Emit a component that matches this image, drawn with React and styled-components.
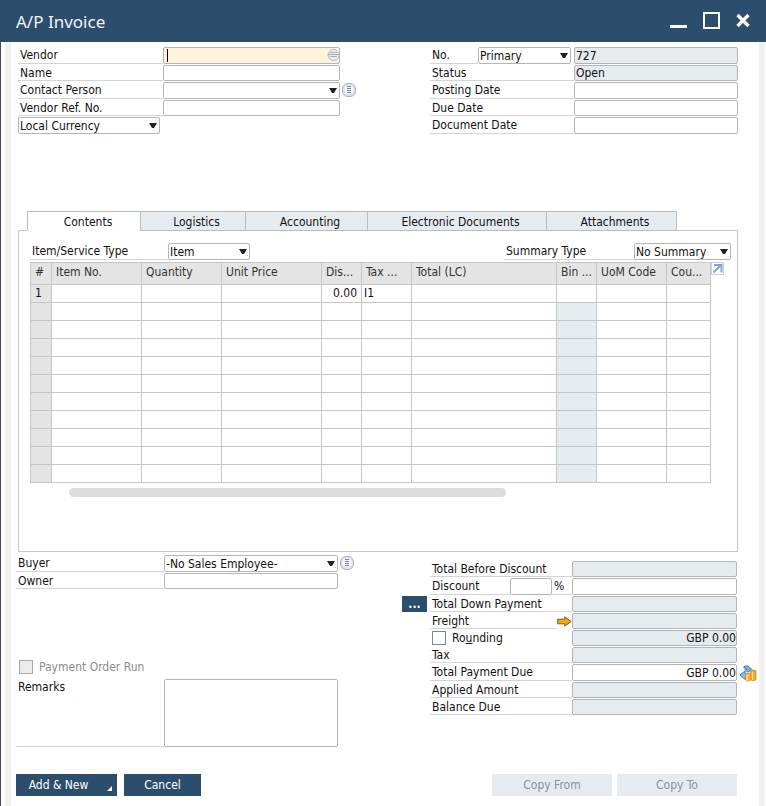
import React from "react";
import styled, { createGlobalStyle } from "styled-components";

const tabs = [
  { name: "Contents", width: 114, active: true },
  { name: "Logistics", width: 105 },
  { name: "Accounting", width: 122 },
  { name: "Electronic Documents", width: 179 },
  { name: "Attachments", width: 130 },
];

const columns = [
  { title: "#", width: 21 },
  { title: "Item No.", width: 90 },
  { title: "Quantity", width: 80 },
  { title: "Unit Price", width: 100 },
  { title: "Dis...", width: 40 },
  { title: "Tax ...", width: 50 },
  { title: "Total (LC)", width: 145 },
  { title: "Bin ...", width: 40 },
  { title: "UoM Code", width: 70 },
  { title: "Cou...", width: 44 },
];

const rows = [
  ["1", "", "", "", "0.00", "I1", "", "", "", ""],
  ...Array.from({ length: 10 }, () => Array(10).fill("")),
];

const ListIcon = () => (
  <svg width="14" height="14" viewBox="0 0 14 14" aria-hidden="true">
    <rect x="0.5" y="0.5" width="13" height="13" rx="5.5" fill="#dfe3f1" stroke="#a9b0c4" />
    <circle cx="7" cy="6.5" r="4.5" fill="#f3f4fa" />
    <path d="M5 3.5h4M5 5.5h4M5 7.5h4M5 9.5h4" stroke="#7b8190" />
  </svg>
);

const LookupIcon = () => (
  <svg width="13" height="14" viewBox="0 0 13 14" aria-hidden="true">
    <circle cx="6.5" cy="7" r="5.5" fill="#e9ecec" stroke="#b3bac2" />
    <path d="M3 4.5h7M1 6.5h10M3 8.5h7" stroke="#9db1c9" />
  </svg>
);

const ExpandIcon = () => (
  <svg width="14" height="14" viewBox="0 0 14 14" aria-hidden="true">
    <rect x="0.5" y="0.5" width="12" height="12" fill="#fff" stroke="#c3d0e3" />
    <path d="M2.5 10.500l7-7M3 3h7.500v7.500" fill="none" stroke="#8ba3c7" strokeWidth="2" />
  </svg>
);

const ArrowIcon = () => (
  <svg width="15" height="11" viewBox="0 0 15 11" aria-hidden="true">
    <path
      d="M.7 3.2h7.1V.8l6.2 4.7-6.2 4.7V7.8H.7z"
      fill="#f2a90c"
      stroke="#7a5c1c"
      strokeWidth="1"
    />
  </svg>
);

const CoinsIcon = () => (
  <svg width="18" height="17" viewBox="0 0 18 17" aria-hidden="true">
    <path
      d="M5 1.500c3-1.500 6 0 6 2.500h1.500L9 7.500 6 4.500h1.500C7.500 3.500 6.500 2.500 5 3z"
      fill="#7cb5e2"
      stroke="#2f6fa8"
    />
    <path
      d="M1 10l5-4v2c1 2 1 4 0 6.500l-2-2z"
      fill="#8cc0e8"
      stroke="#2f6fa8"
    />
    <path
      d="M6.500 9.500c0-1.500 5-1.500 5 0v5.500c0 1.500-5 1.500-5 0z"
      fill="#f6b73c"
      stroke="#d98a16"
      strokeWidth="0.8"
    />
    <path
      d="M11.500 6c0-1.300 5.500-1.300 5.500 0v8.500c0 1.300-5.500 1.300-5.500 0z"
      fill="#f3a622"
      stroke="#d98a16"
      strokeWidth="0.8"
    />
    <path d="M8 10v6M13.500 7v8" stroke="#fde3a0" strokeWidth="1.300" />
  </svg>
);

const Select = ({ id, label, value }) => (
  <SelectBox>
    <select id={id} aria-label={label} defaultValue={value}>
      <option>{value}</option>
    </select>
    <svg width="8" height="5" viewBox="0 0 8 5" aria-hidden="true">
      <path d="M0 0h8L5 5H3z" fill="#222" />
    </svg>
  </SelectBox>
);

const Field = ({ id, label, value, readOnly, right }) => (
  <Row>
    <Label htmlFor={id}>{label}</Label>
    <Input id={id} defaultValue={value} readOnly={readOnly} $muted={readOnly} $right={right} />
  </Row>
);

const App = () => {
  return (
    <>
      <GlobalStyle />
      <Window>
        <TitleBar>
          <h1>A/P Invoice</h1>
          <WindowButtons>
            <button aria-label="Minimize">
              <svg width="17" height="17" viewBox="0 0 17 17">
                <path d="M0 14.500h17" stroke="#fff" strokeWidth="3" />
              </svg>
            </button>
            <button aria-label="Maximize">
              <svg width="17" height="17" viewBox="0 0 17 17">
                <path d="M1 1h15v15H1z" fill="none" stroke="#fff" strokeWidth="2" />
              </svg>
            </button>
            <button aria-label="Close">
              <svg width="14" height="17" viewBox="0 0 14 17">
                <path d="M1.500 3l11 11M12.500 3l-11 11" stroke="#fff" strokeWidth="3.400" />
              </svg>
            </button>
          </WindowButtons>
        </TitleBar>

        <Frame>
          <Content>
            <Header>
              <Fields>
                <Row>
                  <Label htmlFor="vendor">Vendor</Label>
                  <Lookup>
                    <Input id="vendor" $active />
                    <Caret />
                    <LookupIcon />
                  </Lookup>
                </Row>
                <Field id="name" label="Name" />
                <Row>
                  <Label htmlFor="contact">Contact Person</Label>
                  <Select id="contact" value="" />
                  <SideButton aria-label="Contact details">
                    <ListIcon />
                  </SideButton>
                </Row>
                <Field id="ref" label="Vendor Ref. No." />
                <Row $columns="142px">
                  <Select label="Currency" value="Local Currency" />
                </Row>
              </Fields>

              <Fields $columns="144px 1fr">
                <Row $columns="48px 93px 3px 1fr">
                  <Label htmlFor="docNo">No.</Label>
                  <Select label="Series" value="Primary" />
                  <span />
                  <Input id="docNo" defaultValue="727" readOnly $muted />
                </Row>
                <Field id="status" label="Status" value="Open" readOnly />
                <Field id="posting" label="Posting Date" />
                <Field id="due" label="Due Date" />
                <Field id="document" label="Document Date" />
              </Fields>
            </Header>

            <Tabs role="tablist">
              {tabs.map((tab) => (
                <Tab
                  key={tab.name}
                  role="tab"
                  aria-selected={!!tab.active}
                  $active={tab.active}
                  $width={tab.width}
                >
                  {tab.name}
                </Tab>
              ))}
            </Tabs>

            <Panel>
              <PanelTop>
                <Row $columns="138px 82px">
                  <Label htmlFor="itemType">Item/Service Type</Label>
                  <Select id="itemType" value="Item" />
                </Row>
                <Row $columns="130px 97px">
                  <Label htmlFor="summary">Summary Type</Label>
                  <Select id="summary" value="No Summary" />
                </Row>
              </PanelTop>
              <TableArea>
                <Table>
                  <colgroup>
                    {columns.map((col) => (
                      <Col key={col.title} $width={col.width} />
                    ))}
                  </colgroup>
                  <thead>
                    <tr>
                      {columns.map((col) => (
                        <th key={col.title}>{col.title}</th>
                      ))}
                    </tr>
                  </thead>
                  <tbody>
                    {rows.map((row, i) => (
                      <tr key={i}>
                        {row.map((cell, j) => (
                          <Cell
                            key={j}
                            $head={j === 0}
                            $right={j === 4}
                            $muted={j === 7 && i > 0}
                          >
                            {cell}
                          </Cell>
                        ))}
                      </tr>
                    ))}
                  </tbody>
                </Table>
                <IconButton aria-label="Expand table">
                  <ExpandIcon />
                </IconButton>
              </TableArea>
              <ScrollTrack>
                <ScrollThumb />
              </ScrollTrack>
            </Panel>

            <Bottom>
              <BottomLeft>
                <Fields $columns="148px 1fr">
                  <Row>
                    <Label htmlFor="buyer">Buyer</Label>
                    <Select id="buyer" value="-No Sales Employee-" />
                    <SideButton aria-label="Buyer details">
                      <ListIcon />
                    </SideButton>
                  </Row>
                  <Field id="owner" label="Owner" />
                </Fields>
                <div>
                  <CheckLabel $disabled>
                    <input type="checkbox" disabled />
                    <span>Payment Order Run</span>
                  </CheckLabel>
                  <Remarks>
                    <Label htmlFor="remarks">Remarks</Label>
                    <textarea id="remarks" />
                  </Remarks>
                </div>
              </BottomLeft>

              <Fields $columns="142px 1fr" $rows="17px 18px 17px 17px 17px">
                <Field id="before" label="Total Before Discount" readOnly />
                <Row $columns="80px 42px 20px 1fr">
                  <Label htmlFor="discount">Discount</Label>
                  <Input id="discount" aria-label="Discount percent" />
                  <Label htmlFor="discountTotal">%</Label>
                  <Input id="discountTotal" />
                </Row>
                <Row>
                  <MoreButton aria-label="Down payments">...</MoreButton>
                  <Label htmlFor="down">Total Down Payment</Label>
                  <Input id="down" readOnly $muted />
                </Row>
                <Row $columns="127px 15px 1fr">
                  <Label htmlFor="freight">Freight</Label>
                  <IconButton aria-label="Open freight">
                    <ArrowIcon />
                  </IconButton>
                  <Input id="freight" readOnly $muted />
                </Row>
                <Row>
                  <CheckLabel>
                    <input type="checkbox" />
                    <span>
                      Ro<u>u</u>nding
                    </span>
                  </CheckLabel>
                  <Input aria-label="Rounding" defaultValue="GBP 0.00" readOnly $muted $right />
                </Row>
                <Field id="tax" label="Tax" readOnly />
                <Row>
                  <Label htmlFor="payment">Total Payment Due</Label>
                  <Input id="payment" defaultValue="GBP 0.00" $right />
                  <SideButton aria-label="Payment means">
                    <CoinsIcon />
                  </SideButton>
                </Row>
                <Field id="applied" label="Applied Amount" readOnly />
                <Field id="balance" label="Balance Due" readOnly />
              </Fields>
            </Bottom>

            <Footer>
              <ButtonGroup>
                <Button $width={101} $menu>
                  Add &amp; New
                  <svg width="5" height="5" viewBox="0 0 5 5">
                    <path d="M5 0v5H0z" fill="#fff" />
                  </svg>
                </Button>
                <Button $width={77}>Cancel</Button>
              </ButtonGroup>
              <ButtonGroup $tight>
                <Button $width={120} disabled>
                  Copy From
                </Button>
                <Button $width={120} disabled>
                  Copy To
                </Button>
              </ButtonGroup>
            </Footer>
          </Content>
        </Frame>
      </Window>
    </>
  );
};

export default App;

const GlobalStyle = createGlobalStyle`
  * {
    box-sizing: border-box;
  }
  body {
    margin: 0;
    background-color: #fff;
  }
  body, button, input, select, textarea {
    font-family: "DejaVu Sans Condensed", Tahoma, "Noto Sans", sans-serif;
    font-size: 12px;
    color: #111;
  }
  button {
    border: none;
    padding: 0;
    background: none;
    cursor: pointer;
  }
  svg {
    display: block;
  }
`;

const Window = styled.div`
  min-height: 100vh;
  display: flex;
  flex-direction: column;
`;

const TitleBar = styled.header`
  height: 42px;
  display: flex;
  align-items: center;
  justify-content: space-between;
  padding: 0 16px 2px;
  background-color: #2c4d6b;
  h1 {
    margin: 0;
    padding-top: 2px;
    font-family: "Noto Sans", sans-serif;
    font-size: 17px;
    font-weight: 400;
    color: #f2f5f8;
  }
`;

const WindowButtons = styled.div`
  display: flex;
  align-items: center;
  gap: 16px;
`;

const Frame = styled.div`
  flex: 1;
  display: flex;
  border-left: 1px solid #3c4a60;
  padding: 0 1px 0 4px;
`;

const Content = styled.main`
  flex: 1;
  min-width: 0;
  border: solid #f1f1f1;
  border-width: 0 6px;
  padding: 5px 21px 10px 7px;
`;

const Header = styled.section`
  display: grid;
  grid-template-columns: 322fr 308fr;
  column-gap: 90px;
  min-height: 164px;
`;

const Fields = styled.div`
  --columns: ${({ $columns }) => $columns || "145px 1fr"};
  display: grid;
  grid-auto-rows: ${({ $rows }) => $rows || "18px 17px"};
  align-content: start;
`;

const Row = styled.div`
  position: relative;
  display: grid;
  grid-template-columns: ${({ $columns }) => $columns || "var(--columns)"};
  grid-template-rows: minmax(0, 1fr);
  padding-bottom: 1px;
`;

const Label = styled.label`
  padding-left: 2px;
  line-height: 17px;
  white-space: nowrap;
  border-bottom: 1px solid #d4d4d4;
`;

const Input = styled.input`
  width: 100%;
  min-width: 0;
  height: 100%;
  border: 1px solid #b4b4b4;
  border-radius: 2px;
  outline: none;
  padding: ${({ $right }) => ($right ? "0" : "0 1px")};
  text-align: ${({ $right }) => ($right ? "right" : "left")};
  background-color: ${({ $muted, $active }) =>
    $muted ? "#e6ebef" : $active ? "#fef4dd" : "#fff"};
`;

const Lookup = styled.div`
  position: relative;
  svg {
    position: absolute;
    top: 1px;
    right: 0;
  }
`;

const Caret = styled.span`
  position: absolute;
  left: 4px;
  top: 2px;
  bottom: 2px;
  width: 1px;
  background-color: #000;
`;

const SelectBox = styled.div`
  position: relative;
  select {
    display: block;
    width: 100%;
    height: 100%;
    appearance: none;
    border: 1px solid #b4b4b4;
    border-radius: 2px;
    outline: none;
    padding: 0 14px 0 1px;
    background-color: #fff;
  }
  svg {
    position: absolute;
    right: 3px;
    top: 6px;
    pointer-events: none;
  }
`;

const SideButton = styled.button`
  position: absolute;
  left: 100%;
  top: 1px;
  margin-left: 2px;
`;

const MoreButton = styled.button`
  position: absolute;
  right: 100%;
  top: 0;
  width: 25px;
  height: 16px;
  margin-right: 3px;
  line-height: 12px;
  font-weight: 700;
  color: #fff;
  background-color: #2c4d6b;
`;

const IconButton = styled.button`
  display: flex;
  align-items: center;
`;

const Tabs = styled.div`
  position: relative;
  display: flex;
  padding-left: 9px;
  margin-bottom: -1px;
`;

const Tab = styled.button`
  flex: 0 1 ${({ $width }) => $width}px;
  height: 20px;
  padding: 1px 0 0 7px;
  border: 1px solid #b9bdc0;
  border-left-width: ${({ $active }) => ($active ? "1px" : "0")};
  border-right-width: ${({ $active }) => ($active ? "0" : "1px")};
  border-bottom-color: ${({ $active }) => ($active ? "#fff" : "#b9bdc0")};
  background-color: ${({ $active }) => ($active ? "#fff" : "#e6ebef")};
  & + & {
    box-shadow: -1px 0 0 #b9bdc0;
  }
`;

const Panel = styled.section`
  min-height: 322px;
  border: 1px solid #c6c6c6;
  padding: 12px 6px 0 11px;
`;

const PanelTop = styled.div`
  height: 19px;
  display: flex;
  align-items: flex-start;
  justify-content: space-between;
  > div {
    height: 18px;
  }
`;

const TableArea = styled.div`
  display: flex;
  align-items: flex-start;
  padding-right: 7px;
`;

const Table = styled.table`
  flex: 1;
  width: 100%;
  table-layout: fixed;
  border-collapse: separate;
  border-spacing: 0;
  border: solid #c6c6c6;
  border-width: 1px 0 0 1px;
  th {
    height: 22px;
    padding: 0 0 3px 4px;
    font-weight: 400;
    text-align: left;
    color: #333;
    white-space: nowrap;
    background-color: #e4e4e4;
    border: solid #c6c6c6;
    border-width: 0 1px 1px 0;
  }
`;

const Col = styled.col`
  width: ${({ $width }) => $width}px;
`;

const Cell = styled.td`
  height: 18px;
  padding: 0 4px 0 ${({ $head }) => ($head ? 4 : 2)}px;
  line-height: 17px;
  text-align: ${({ $right }) => ($right ? "right" : "left")};
  background-color: ${({ $head, $muted }) =>
    $head ? "#e4e4e4" : $muted ? "#e6ebef" : "#fff"};
  border: solid #c6c6c6;
  border-width: 0 1px 1px 0;
`;

const ScrollTrack = styled.div`
  padding: 5px 0 0 39px;
`;

const ScrollThumb = styled.div`
  width: 66%;
  height: 9px;
  border-radius: 5px;
  background-color: #dcdcdc;
`;

const Bottom = styled.section`
  display: grid;
  grid-template-columns: 322fr 307fr;
  column-gap: 92px;
  margin: 3px 1px 0 -2px;
  > :last-child {
    padding-top: 6px;
  }
`;

const BottomLeft = styled.div`
  display: flex;
  flex-direction: column;
  justify-content: space-between;
  min-height: 192px;
`;

const CheckLabel = styled.label`
  display: flex;
  align-items: center;
  gap: 6px;
  padding-left: ${({ $disabled }) => ($disabled ? 3 : 2)}px;
  color: ${({ $disabled }) => ($disabled ? "#8b8b8b" : "#111")};
  input {
    appearance: none;
    width: 14px;
    height: 14px;
    margin: 0;
    border: 1px solid ${({ $disabled }) => ($disabled ? "#aaa" : "#7d8890")};
    background-color: ${({ $disabled }) => ($disabled ? "#ebebeb" : "#fff")};
  }
`;

const Remarks = styled.div`
  display: grid;
  grid-template-columns: 148px 1fr;
  margin-top: 5px;
  textarea {
    display: block;
    height: 68px;
    resize: none;
    outline: none;
    border: 1px solid #b4b4b4;
    border-radius: 2px;
  }
`;

const Footer = styled.footer`
  display: flex;
  justify-content: space-between;
  margin: 27px 1px 0 -2px;
`;

const ButtonGroup = styled.div`
  display: flex;
  gap: ${({ $tight }) => ($tight ? 5 : 7)}px;
`;

const Button = styled.button`
  position: relative;
  width: ${({ $width }) => $width}px;
  height: 22px;
  padding-right: ${({ $menu }) => ($menu ? 16 : 0)}px;
  color: #fff;
  background-color: #2c4d6b;
  &:disabled {
    color: #8592a3;
    background-color: #e6ebef;
    cursor: default;
  }
  svg {
    position: absolute;
    right: 5px;
    bottom: 5px;
  }
`;
